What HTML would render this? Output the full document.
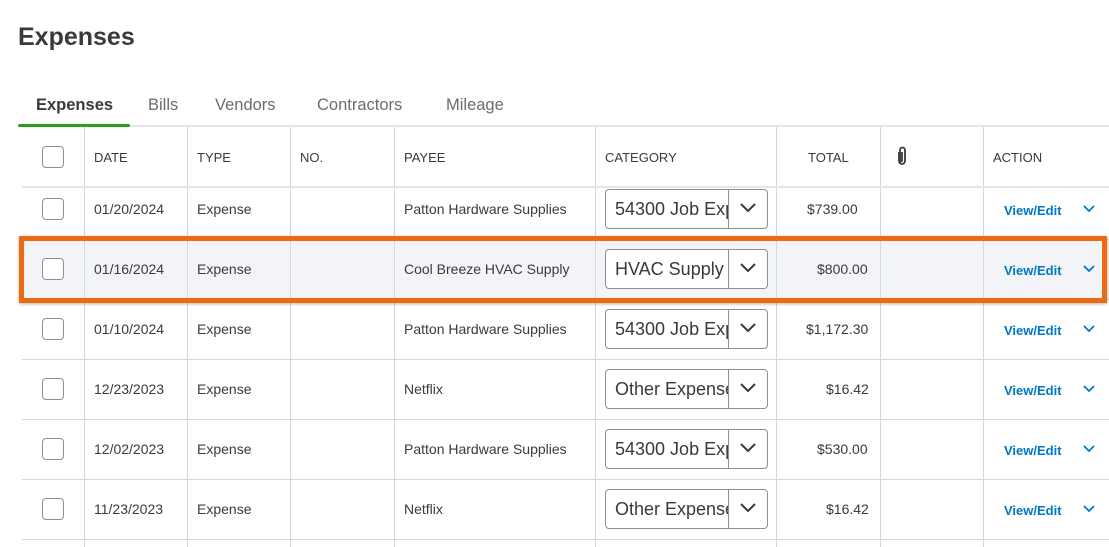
<!DOCTYPE html>
<html><head><style>
*{margin:0;padding:0;box-sizing:border-box}
body{width:1109px;height:547px;overflow:hidden;background:#fff;font-family:"Liberation Sans",sans-serif;position:relative;color:#393a3d}
.a{position:absolute}
.t{font-size:14px;color:#393a3d;white-space:nowrap}
.h{font-size:13px;color:#393a3d;white-space:nowrap}
.vl{position:absolute;width:1px;background:#d4d7dc;top:127px;height:420px}
.hl{position:absolute;height:1px;background:#d4d7dc;left:22px;width:1087px}
.cb{position:absolute;left:42px;width:22px;height:22px;border:1.5px solid #8d9096;border-radius:4px;background:#fff}
.sel{position:absolute;left:605px;width:163px;height:40px;border:1px solid #8d9096;border-radius:4px;background:#fff;overflow:hidden}
.sel span{position:absolute;left:9px;top:9px;font-size:18px;color:#393a3d;white-space:nowrap;width:113px;overflow:hidden}
.sel i{position:absolute;left:122px;top:0;width:1px;height:40px;background:#8d9096}
.sel svg{position:absolute;left:134px;top:13px}
.ve{position:absolute;left:1004px;font-size:13px;color:#0077c5;font-weight:bold}
.dd{position:absolute;left:1083px}
</style></head><body>
<div class="a" style="left:18px;top:23px;font-size:25px;font-weight:bold;color:#393a3d">Expenses</div>
<div class="a t" style="left:36px;top:96px;font-size:16.5px;font-weight:bold">Expenses</div>
<div class="a t" style="left:148px;top:96px;font-size:16.5px;color:#6b6c72">Bills</div>
<div class="a t" style="left:215px;top:96px;font-size:16.5px;color:#6b6c72">Vendors</div>
<div class="a t" style="left:317px;top:96px;font-size:16.5px;color:#6b6c72">Contractors</div>
<div class="a t" style="left:446px;top:96px;font-size:16.5px;color:#6b6c72">Mileage</div>
<div class="a" style="left:18px;top:125px;width:1091px;height:2px;background:#e3e5e8"></div>
<div class="a" style="left:18px;top:124px;width:112px;height:3px;background:#2ca01c;border-radius:2px"></div>

<div class="a" style="left:22px;top:240px;width:1087px;height:59px;background:#f3f4f8"></div>

<div class="vl" style="left:84px"></div><div class="vl" style="left:187px"></div><div class="vl" style="left:290px"></div><div class="vl" style="left:394px"></div><div class="vl" style="left:595px"></div><div class="vl" style="left:776px"></div><div class="vl" style="left:880px"></div><div class="vl" style="left:983px"></div>
<div class="hl" style="top:186px;height:2px;background:#e3e5e8"></div>
<div class="hl" style="top:239px"></div><div class="hl" style="top:299px"></div><div class="hl" style="top:359px"></div><div class="hl" style="top:419px"></div><div class="hl" style="top:479px"></div><div class="hl" style="top:539px"></div>

<div class="cb" style="top:146px"></div>
<div class="a h" style="left:94px;top:150px">DATE</div>
<div class="a h" style="left:197px;top:150px">TYPE</div>
<div class="a h" style="left:300px;top:150px">NO.</div>
<div class="a h" style="left:404px;top:150px">PAYEE</div>
<div class="a h" style="left:605px;top:150px">CATEGORY</div>
<div class="a h" style="left:808px;top:150px">TOTAL</div>
<div class="a h" style="left:993px;top:150px">ACTION</div>
<svg class="a" style="left:896px;top:146px" width="12" height="20" viewBox="0 0 12 20"><path d="M3 6v9a3 3 0 0 0 6 0V4a2.5 2.5 0 0 0-5 0v10.5a1 1 0 0 0 2 0V6" fill="none" stroke="#393a3d" stroke-width="1.8"/></svg>

<div class="cb" style="top:198px"></div><div class="a t" style="left:94px;top:201px">01/20/2024</div><div class="a t" style="left:197px;top:201px">Expense</div><div class="a t" style="left:404px;top:201px">Patton Hardware Supplies</div>
<div class="sel" style="top:189px"><span>54300 Job Expenses</span><i></i><svg width="16" height="10"><path d="M1 1l7 7 7-7" fill="none" stroke="#393a3d" stroke-width="2"/></svg></div>
<div class="a t" style="left:807px;top:201px">$739.00</div>

<div class="cb" style="top:258px"></div><div class="a t" style="left:94px;top:261px">01/16/2024</div><div class="a t" style="left:197px;top:261px">Expense</div><div class="a t" style="left:404px;top:261px">Cool Breeze HVAC Supply</div>
<div class="sel" style="top:249px"><span>HVAC Supply</span><i></i><svg width="16" height="10"><path d="M1 1l7 7 7-7" fill="none" stroke="#393a3d" stroke-width="2"/></svg></div>
<div class="a t" style="left:817px;top:261px">$800.00</div>

<div class="cb" style="top:318px"></div><div class="a t" style="left:94px;top:321px">01/10/2024</div><div class="a t" style="left:197px;top:321px">Expense</div><div class="a t" style="left:404px;top:321px">Patton Hardware Supplies</div>
<div class="sel" style="top:309px"><span>54300 Job Expenses</span><i></i><svg width="16" height="10"><path d="M1 1l7 7 7-7" fill="none" stroke="#393a3d" stroke-width="2"/></svg></div>
<div class="a t" style="left:806px;top:321px">$1,172.30</div>

<div class="cb" style="top:378px"></div><div class="a t" style="left:94px;top:381px">12/23/2023</div><div class="a t" style="left:197px;top:381px">Expense</div><div class="a t" style="left:404px;top:381px">Netflix</div>
<div class="sel" style="top:369px"><span>Other Expenses</span><i></i><svg width="16" height="10"><path d="M1 1l7 7 7-7" fill="none" stroke="#393a3d" stroke-width="2"/></svg></div>
<div class="a t" style="left:826px;top:381px">$16.42</div>

<div class="cb" style="top:438px"></div><div class="a t" style="left:94px;top:441px">12/02/2023</div><div class="a t" style="left:197px;top:441px">Expense</div><div class="a t" style="left:404px;top:441px">Patton Hardware Supplies</div>
<div class="sel" style="top:429px"><span>54300 Job Expenses</span><i></i><svg width="16" height="10"><path d="M1 1l7 7 7-7" fill="none" stroke="#393a3d" stroke-width="2"/></svg></div>
<div class="a t" style="left:817px;top:441px">$530.00</div>

<div class="cb" style="top:498px"></div><div class="a t" style="left:94px;top:501px">11/23/2023</div><div class="a t" style="left:197px;top:501px">Expense</div><div class="a t" style="left:404px;top:501px">Netflix</div>
<div class="sel" style="top:489px"><span>Other Expenses</span><i></i><svg width="16" height="10"><path d="M1 1l7 7 7-7" fill="none" stroke="#393a3d" stroke-width="2"/></svg></div>
<div class="a t" style="left:826px;top:501px">$16.42</div>

<div class="ve" style="top:203px">View/Edit</div><div class="ve" style="top:263px">View/Edit</div><div class="ve" style="top:323px">View/Edit</div><div class="ve" style="top:383px">View/Edit</div><div class="ve" style="top:443px">View/Edit</div><div class="ve" style="top:503px">View/Edit</div>
<svg class="dd" style="top:205px" width="12" height="8"><path d="M1 1l5 5 5-5" fill="none" stroke="#0077c5" stroke-width="1.8"/></svg>
<svg class="dd" style="top:265px" width="12" height="8"><path d="M1 1l5 5 5-5" fill="none" stroke="#0077c5" stroke-width="1.8"/></svg>
<svg class="dd" style="top:325px" width="12" height="8"><path d="M1 1l5 5 5-5" fill="none" stroke="#0077c5" stroke-width="1.8"/></svg>
<svg class="dd" style="top:385px" width="12" height="8"><path d="M1 1l5 5 5-5" fill="none" stroke="#0077c5" stroke-width="1.8"/></svg>
<svg class="dd" style="top:445px" width="12" height="8"><path d="M1 1l5 5 5-5" fill="none" stroke="#0077c5" stroke-width="1.8"/></svg>
<svg class="dd" style="top:505px" width="12" height="8"><path d="M1 1l5 5 5-5" fill="none" stroke="#0077c5" stroke-width="1.8"/></svg>

<div class="a" style="left:19px;top:236px;width:1088px;height:67px;border:5px solid #ec6a12;box-shadow:0 1px 3px rgba(0,0,0,.3)"></div>
</body></html>
